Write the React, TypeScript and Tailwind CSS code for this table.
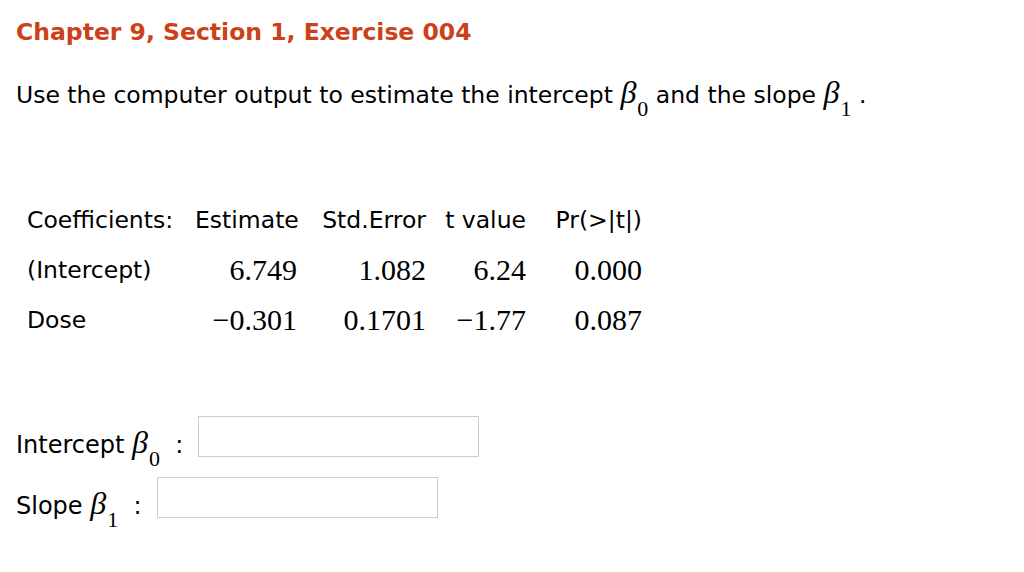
const sans = 'font-["DejaVu_Sans","Verdana",sans-serif]';

function Beta({ sub }: { sub: string }) {
    return (
        <span className='font-["Liberation_Serif",serif] text-[32px] italic leading-none'>
            β<sub className="ml-[1px] text-[22px] not-italic align-[-7px]">{sub}</sub>
        </span>
    );
}

const rows = [
    ['(Intercept)', '6.749', '1.082', '6.24', '0.000'],
    ['Dose', '−0.301', '0.1701', '−1.77', '0.087'],
];

export default function App() {
    return (
        <div className={`${sans} h-[572px] w-[1024px] bg-white text-black`}>
            <h1 className="pl-4 pt-[18px] text-[23.5px] font-bold leading-[28px] text-[#cc4119]">
                Chapter 9, Section 1, Exercise 004
            </h1>

            <p className="mt-[30px] pl-4 text-[23.5px] leading-[28px]">
                Use the computer output to estimate the intercept <Beta sub="0" /> and the slope <Beta sub="1" /> .
            </p>

            <div className="ml-[27px] mt-[97px] grid grid-cols-[168px_102px_129px_100px_116px] text-[23.5px]">
                <div className="h-[50px] leading-[28px]">Coefficients:</div>
                <div className="h-[50px] text-right leading-[28px]">Estimate</div>
                <div className="h-[50px] text-right leading-[28px]">Std.Error</div>
                <div className="h-[50px] text-right leading-[28px]">t value</div>
                <div className="h-[50px] text-right leading-[28px]">Pr(&gt;|t|)</div>
                {rows.map((r) =>
                    r.map((c, i) =>
                        i === 0 ? (
                            <div key={r[0] + i} className="h-[50px] leading-[28px]">{c}</div>
                        ) : (
                            <div
                                key={r[0] + i}
                                className='h-[50px] text-right font-["Liberation_Serif",serif] text-[30px] leading-[28px]'
                            >
                                {c}
                            </div>
                        ),
                    ),
                )}
            </div>

            <div className="mt-[54px] flex flex-col gap-[8px] pl-4 text-[24px]">
                <div className="flex items-center">
                    <span className="mt-[16px]">Intercept <Beta sub="0" /> &nbsp;:</span>
                    <input className="ml-[15px] h-[41px] w-[281px] border border-[#cccccc] outline-none" />
                </div>
                <div className="flex items-center">
                    <span className="mt-[16px]">Slope <Beta sub="1" /> &nbsp;:</span>
                    <input className="ml-[15px] h-[41px] w-[281px] border border-[#cccccc] outline-none" />
                </div>
            </div>
        </div>
    );
}
